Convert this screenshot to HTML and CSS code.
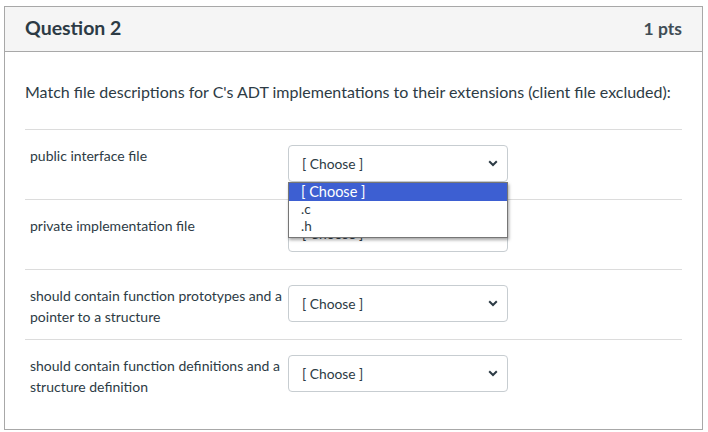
FILE: index.html
```html
<!DOCTYPE html>
<html>
<head>
<meta charset="utf-8">
<link rel="stylesheet" href="styles.css">
</head>
<body>
<div class="question">
  <div class="header">
    <h2 class="title">Question 2</h2>
    <span class="pts">1 pts</span>
  </div>
  <div class="content">
    <p class="prompt">Match file descriptions for C's ADT implementations to their extensions (client file excluded):</p>
    <div class="rows">
      <div class="row">
        <div class="label">public interface file</div>
        <div class="select-wrap">
          <div class="select"><span class="sel-text">[ Choose ]</span><svg class="chev" width="10" height="7" viewBox="0 0 10 7"><path d="M1.2 1.3 L5 5 L8.8 1.3" fill="none" stroke="#2d3b45" stroke-width="2"/></svg></div>
          <ul class="menu">
            <li class="opt active">[ Choose ]</li>
            <li class="opt">.c</li>
            <li class="opt">.h</li>
          </ul>
        </div>
      </div>
      <div class="row">
        <div class="label">private implementation file</div>
        <div class="select-wrap">
          <div class="select"><span class="sel-text">[ Choose ]</span><svg class="chev" width="10" height="7" viewBox="0 0 10 7"><path d="M1.2 1.3 L5 5 L8.8 1.3" fill="none" stroke="#2d3b45" stroke-width="2"/></svg></div>
        </div>
      </div>
      <div class="row">
        <div class="label">should contain function prototypes and a pointer to a structure</div>
        <div class="select-wrap">
          <div class="select"><span class="sel-text">[ Choose ]</span><svg class="chev" width="10" height="7" viewBox="0 0 10 7"><path d="M1.2 1.3 L5 5 L8.8 1.3" fill="none" stroke="#2d3b45" stroke-width="2"/></svg></div>
        </div>
      </div>
      <div class="row">
        <div class="label">should contain function definitions and a structure definition</div>
        <div class="select-wrap">
          <div class="select"><span class="sel-text">[ Choose ]</span><svg class="chev" width="10" height="7" viewBox="0 0 10 7"><path d="M1.2 1.3 L5 5 L8.8 1.3" fill="none" stroke="#2d3b45" stroke-width="2"/></svg></div>
        </div>
      </div>
    </div>
  </div>
</div>
</body>
</html>
```
FILE: styles.css
```css
html, body {
  margin: 0;
  padding: 0;
  background: #fff;
}
body {
  font-family: Lato, "Liberation Sans", sans-serif;
  color: #2d3b45;
  padding: 6px 0 0 4px;
}
.question {
  width: 697px;
  height: 422px;
  border: 1px solid #a8a8a8;
  box-sizing: content-box;
}
.header {
  height: 44px;
  background: #f5f5f5;
  border-bottom: 1px solid #a8a8a8;
  display: flex;
  align-items: center;
  justify-content: space-between;
  padding: 0 20px;
}
.title {
  margin: 0;
  font-size: 19.5px;
  font-weight: 700;
  line-height: 1;
  margin-top: -2px;
}
.pts {
  font-size: 17.5px;
  font-weight: 700;
  color: #2d3b45;
  opacity: 0.9;
  margin-top: -2px;
}
.content {
  padding: 0 20px;
}
.prompt {
  margin: 0;
  padding-top: 29px;
  height: 48px;
  font-size: 16px;
  line-height: 22px;
}
.rows {
  border-top: 1px solid #dcdcdc;
}
.row {
  display: flex;
  height: 69px;
  border-bottom: 1px solid #dcdcdc;
  box-sizing: content-box;
}
.row:last-child {
  border-bottom: none;
}
.label {
  width: 253px;
  padding: 15px 0 0 5px;
  font-size: 14px;
  line-height: 21px;
}
.select-wrap {
  position: relative;
  margin-top: 15px;
  margin-left: 5px;
}
.select {
  width: 220px;
  height: 37px;
  border: 1px solid #c7cdd1;
  border-radius: 4px;
  background: #fff;
  display: flex;
  align-items: center;
  justify-content: space-between;
  padding: 0 9px 0 13px;
  box-sizing: border-box;
  font-size: 13.8px;
}
.chev {
  display: block;
}
.menu {
  position: absolute;
  left: 0;
  top: 37px;
  width: 220px;
  box-sizing: border-box;
  margin: 0;
  padding: 0 0 2px 0;
  list-style: none;
  background: #fff;
  border: 1px solid #767676;
  box-shadow: 1px 2px 3px rgba(0, 0, 0, 0.35);
  font-size: 13.5px;
  z-index: 5;
}
.opt {
  height: 17px;
  line-height: 17px;
  padding-left: 12px;
}
.opt.active {
  background: #3d5fd2;
  color: #fff;
  font-size: 14.5px;
  height: 18px;
  line-height: 18px;
}
```
